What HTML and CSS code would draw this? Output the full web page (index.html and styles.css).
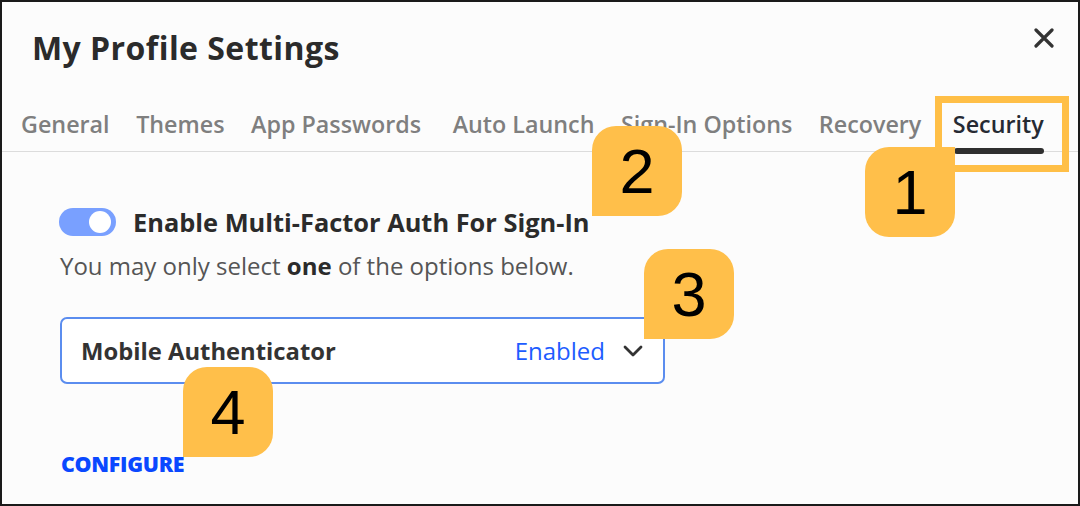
FILE: index.html
```html
<!DOCTYPE html>
<html lang="en">
<head>
<meta charset="utf-8">
<title>My Profile Settings</title>
<link rel="stylesheet" href="styles.css">
</head>
<body>
<div class="frame">
  <header class="header">
    <h1 class="title">My Profile Settings</h1>
    <button class="close" aria-label="Close">
      <svg width="20" height="20" viewBox="0 0 20 20"><path d="M2 2 L18 18 M18 2 L2 18" stroke="#333" stroke-width="3.2" stroke-linecap="round"/></svg>
    </button>
  </header>
  <nav class="tabs">
    <span class="tab">General</span>
    <span class="tab">Themes</span>
    <span class="tab wide">App Passwords</span>
    <span class="tab">Auto Launch</span>
    <span class="tab">Sign-In Options</span>
    <span class="tab wide">Recovery</span>
    <span class="tab active">Security</span>
  </nav>
  <main class="content">
    <div class="mfa-row">
      <span class="toggle"><span class="knob"></span></span>
      <span class="mfa-label">Enable Multi-Factor Auth For Sign-In</span>
    </div>
    <p class="hint">You may only select <b>one</b> of the options below.</p>
    <div class="select">
      <span class="select-name">Mobile Authenticator</span>
      <span class="select-status">Enabled</span>
      <svg class="chev" width="22" height="14" viewBox="0 0 22 14"><path d="M3 3 L11 11 L19 3" fill="none" stroke="#333" stroke-width="2.8" stroke-linecap="round" stroke-linejoin="round"/></svg>
    </div>
    <a class="configure" href="#">CONFIGURE</a>
  </main>

  <div class="highlight"></div>
  <div class="badge b1">1</div>
  <div class="badge b2">2</div>
  <div class="badge b3">3</div>
  <div class="badge b4">4</div>
</div>
</body>
</html>
```

FILE: styles.css
```css
* { box-sizing: border-box; }
html, body { margin: 0; padding: 0; background: #fff; }
.frame {
  position: relative;
  width: 1080px;
  height: 506px;
  border: 2px solid #1a1a1a;
  background: #fcfcfc;
  font-family: "Open Sans", "Noto Sans", sans-serif;
  overflow: hidden;
}
.header {
  display: flex;
  justify-content: space-between;
  align-items: flex-start;
  padding: 26px 24px 0 30px;
}
.title {
  margin: 0;
  font-size: 32px;
  line-height: 40px;
  font-weight: 700;
  letter-spacing: 0.45px;
  color: #2b2b2b;
}
.close {
  border: 0;
  background: none;
  padding: 0;
  margin-top: 0;
  width: 20px;
  height: 20px;
  cursor: pointer;
}
.close svg { display: block; }
.tabs {
  display: flex;
  gap: 26.5px;
  margin-top: 41px;
  padding-left: 19px;
  border-bottom: 1px solid #dcdcdc;
}
.tab {
  position: relative;
  font-size: 23.3px;
  line-height: 30px;
  font-weight: 600;
  color: #7f7f7f;
  padding-bottom: 12px;
  white-space: nowrap;
}
.tab.wide { margin-right: 5px; }
.tab.active { color: #262a33; }
.tab.active::after {
  content: "";
  position: absolute;
  left: 1px;
  right: 0;
  bottom: -3px;
  height: 6px;
  border-radius: 3px;
  background: #2f2f2f;
}
.content { padding: 56px 0 0 57px; }
.mfa-row {
  display: flex;
  align-items: center;
  gap: 17px;
}
.toggle {
  position: relative;
  display: inline-block;
  flex: none;
  width: 57px;
  height: 28px;
  border-radius: 14px;
  background: #79a0ff;
}
.knob {
  position: absolute;
  right: 5px;
  top: 3px;
  width: 22px;
  height: 22px;
  border-radius: 50%;
  background: #fff;
}
.mfa-label {
  font-size: 25.4px;
  line-height: 28px;
  font-weight: 700;
  color: #2b2b2b;
}
.hint {
  margin: 15px 0 0 1px;
  font-size: 24px;
  line-height: 30px;
  color: #555;
}
.hint b { color: #2b2b2b; font-weight: 700; }
.select {
  display: flex;
  align-items: center;
  width: 605px;
  height: 67px;
  margin: 36px 0 0 1px;
  padding: 0 19px 0 19px;
  border: 2.5px solid #5b8def;
  border-radius: 7px;
  background: #fff;
}
.select-name {
  flex: 1;
  font-size: 23.8px;
  font-weight: 700;
  color: #333;
}
.select-status {
  font-size: 24px;
  font-weight: 500;
  color: #1d5cff;
  margin-right: 17px;
}
.chev { display: block; flex: none; }
.configure {
  display: block;
  width: max-content;
  margin: 66px 0 0 2px;
  font-size: 21.4px;
  line-height: 28px;
  font-weight: 800;
  color: #0a48ff;
  text-decoration: none;
  letter-spacing: -0.3px;
}
.highlight {
  position: absolute;
  left: 933px;
  top: 94px;
  width: 134px;
  height: 76px;
  border: 7px solid #ffbf47;
}
.badge {
  position: absolute;
  width: 90px;
  height: 90px;
  background: #ffbf4a;
  color: #000;
  font-family: "Liberation Sans", Arial, sans-serif;
  font-size: 63px;
  line-height: 90px;
  text-align: center;
  border-radius: 24px;
}
.b1 { left: 863px; top: 145px; border-top-right-radius: 0; }
.b2 { left: 590px; top: 124px; border-bottom-left-radius: 0; }
.b3 { left: 642px; top: 247px; border-bottom-left-radius: 0; }
.b4 { left: 181px; top: 365px; border-bottom-left-radius: 0; }
```
